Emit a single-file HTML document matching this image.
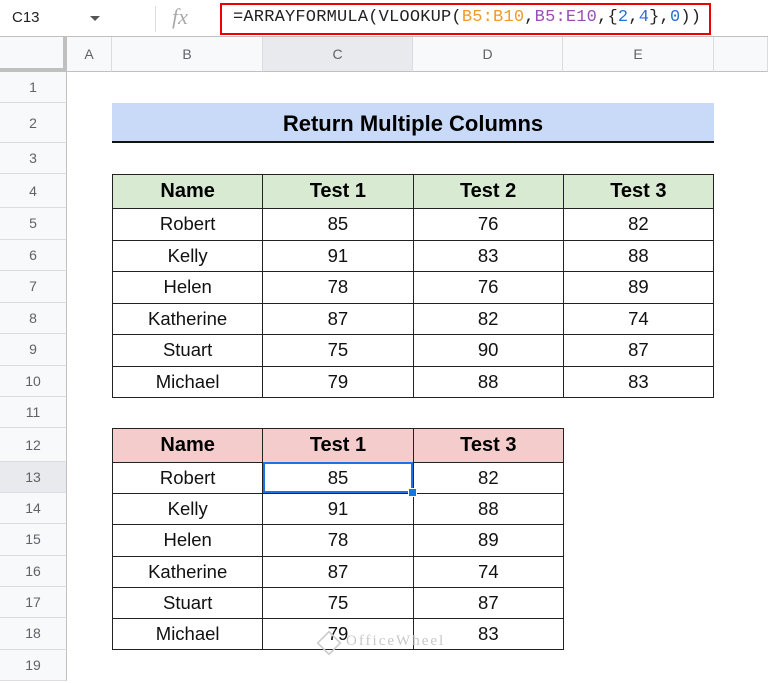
<!DOCTYPE html><html><head><style>
*{margin:0;padding:0;box-sizing:border-box}
body{width:768px;height:683px;overflow:hidden;background:#fff;font-family:"Liberation Sans",Arial,sans-serif;position:relative}
.a{position:absolute}
.rh{position:absolute;left:0;width:67px;background:#f8f9fa;border-bottom:1px solid #dadce0;border-right:1px solid #c0c0c0;color:#5f6368;font-size:14px;display:flex;align-items:center;justify-content:center}
.ch{position:absolute;top:37px;height:35px;background:#f8f9fa;border-right:1px solid #dadce0;border-bottom:1px solid #c0c0c0;color:#5f6368;font-size:14px;display:flex;align-items:center;justify-content:center}
table{position:absolute;border-collapse:collapse}
td{border:1.5px solid #222;text-align:center;font-size:18.5px;color:#111;padding:0;width:150px}
th{border:1.5px solid #222;text-align:center;font-size:20px;font-weight:bold;color:#000;height:34px}
</style></head><body>
<div class="a" style="left:0;top:0;width:768px;height:37px;border-bottom:1px solid #c0c0c0"></div>
<div class="a" style="left:12px;top:9px;font-size:15px;color:#222">C13</div>
<div class="a" style="left:90px;top:16px;border-left:5px solid transparent;border-right:5px solid transparent;border-top:5px solid #555"></div>
<div class="a" style="left:155px;top:6px;width:1px;height:26px;background:#dadce0"></div>
<div class="a" style="left:172px;top:4px;font-family:'Liberation Serif',serif;font-style:italic;font-size:22px;color:#aaa">fx</div>
<div class="a" style="left:220px;top:3px;width:491px;height:32px;border:2.5px solid #e00"></div>
<div class="a" style="left:233px;top:8px;font-family:'Liberation Mono',monospace;font-size:17px;letter-spacing:0.2px;color:#222;white-space:nowrap">=ARRAYFORMULA(VLOOKUP(<span style="color:#f09a28">B5:B10</span>,<span style="color:#9a4fb8">B5:E10</span>,{<span style="color:#2a6ed8">2</span>,<span style="color:#2a6ed8">4</span>},<span style="color:#2a6ed8">0</span>))</div>
<div class="a" style="left:0;top:37px;width:67px;height:35px;background:#f8f9fa;border-right:4px solid #c0c0c0;border-bottom:4px solid #c0c0c0"></div>
<div class="ch" style="left:67px;width:45px">A</div>
<div class="ch" style="left:112px;width:151px">B</div>
<div class="ch" style="left:263px;width:150px;background:#e8eaed">C</div>
<div class="ch" style="left:413px;width:150px">D</div>
<div class="ch" style="left:563px;width:151px">E</div>
<div class="ch" style="left:714px;width:54px"></div>
<div class="rh" style="top:72px;height:31px">1</div>
<div class="rh" style="top:103px;height:40px">2</div>
<div class="rh" style="top:143px;height:31px">3</div>
<div class="rh" style="top:174px;height:34px">4</div>
<div class="rh" style="top:208px;height:31.5px">5</div>
<div class="rh" style="top:239.5px;height:31.5px">6</div>
<div class="rh" style="top:271px;height:31.5px">7</div>
<div class="rh" style="top:302.5px;height:31.5px">8</div>
<div class="rh" style="top:334px;height:31.5px">9</div>
<div class="rh" style="top:365.5px;height:31.5px">10</div>
<div class="rh" style="top:397px;height:31px">11</div>
<div class="rh" style="top:428px;height:34px">12</div>
<div class="rh" style="top:462px;height:31.2px;background:#e8eaed">13</div>
<div class="rh" style="top:493.2px;height:31.2px">14</div>
<div class="rh" style="top:524.4px;height:31.2px">15</div>
<div class="rh" style="top:555.6px;height:31.2px">16</div>
<div class="rh" style="top:586.8px;height:31.2px">17</div>
<div class="rh" style="top:618px;height:31.5px">18</div>
<div class="rh" style="top:649.5px;height:31.5px">19</div>
<div class="a" style="left:112px;top:103px;width:602px;height:40px;background:#c9daf8;border-bottom:2.5px solid #111;display:flex;align-items:center;justify-content:center;padding-top:4px;font-weight:bold;font-size:22px;color:#000">Return Multiple Columns</div>
<table style="left:112px;top:174px;width:602px">
<tr style="background:#d9ead3"><th>Name</th><th>Test 1</th><th>Test 2</th><th>Test 3</th></tr>
<tr style="height:31.5px"><td>Robert</td><td>85</td><td>76</td><td>82</td></tr>
<tr style="height:31.5px"><td>Kelly</td><td>91</td><td>83</td><td>88</td></tr>
<tr style="height:31.5px"><td>Helen</td><td>78</td><td>76</td><td>89</td></tr>
<tr style="height:31.5px"><td>Katherine</td><td>87</td><td>82</td><td>74</td></tr>
<tr style="height:31.5px"><td>Stuart</td><td>75</td><td>90</td><td>87</td></tr>
<tr style="height:31.5px"><td>Michael</td><td>79</td><td>88</td><td>83</td></tr>
</table>
<table style="left:112px;top:428px;width:452px">
<tr style="background:#f4cccc"><th>Name</th><th>Test 1</th><th>Test 3</th></tr>
<tr style="height:31.2px"><td>Robert</td><td>85</td><td>82</td></tr>
<tr style="height:31.2px"><td>Kelly</td><td>91</td><td>88</td></tr>
<tr style="height:31.2px"><td>Helen</td><td>78</td><td>89</td></tr>
<tr style="height:31.2px"><td>Katherine</td><td>87</td><td>74</td></tr>
<tr style="height:31.2px"><td>Stuart</td><td>75</td><td>87</td></tr>
<tr style="height:31.2px"><td>Michael</td><td>79</td><td>83</td></tr>
</table>
<div class="a" style="left:263px;top:462px;width:150px;height:31px;border:2px solid #1a73e8"></div>
<div class="a" style="left:408px;top:488px;width:9px;height:9px;background:#1a73e8;border:1px solid #fff"></div>
<div class="a" style="left:346px;top:633px;font-family:'Liberation Serif',serif;font-size:15px;letter-spacing:2px;color:#c8c8c8">OfficeWheel</div>
<div class="a" style="left:318px;top:632px;width:22px;height:22px;border:2px solid #ccc;transform:rotate(45deg) scale(.8)"></div>
</body></html>
